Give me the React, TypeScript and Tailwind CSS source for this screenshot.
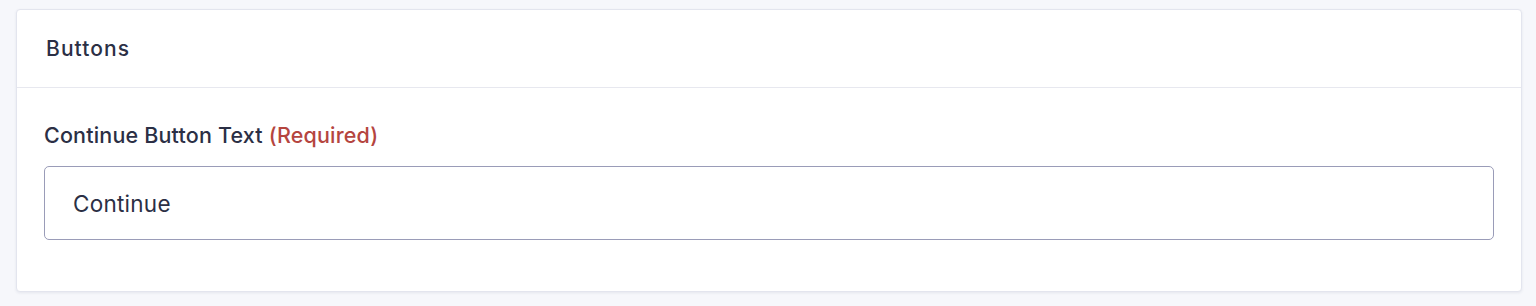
export default function App() {
  return (
    <div className="h-[306px] w-full bg-[#f6f7fb] pt-[9px] pl-4 pr-[14px] font-['Inter',sans-serif]">
      <div className="rounded-[4px] border border-[#e3e5ee] bg-white shadow-[0_1px_3px_rgba(30,35,80,0.08)]">
        <div className="flex h-[78px] items-center border-b border-[#e7e8ef] px-[29px]">
          <h2 className="text-[21px] leading-none font-medium tracking-[1.1px] text-[#2b2f45]">Buttons</h2>
        </div>
        <div className="px-[27px] pt-[34px] pb-[51px]">
          <label className="block text-[21.5px] leading-[26px] font-medium tracking-[0.17px] text-[#2b2f45]">
            Continue Button Text <span className="text-[#b5453f]">(Required)</span>
          </label>
          <input
            readOnly
            value="Continue"
            className="mt-[18px] block h-[74px] w-full rounded-[5px] border-[1.5px] border-[#9a9cb8] px-[28px] text-[22.5px] tracking-[0.25px] text-[#2b2f45] outline-none"
          />
        </div>
      </div>
    </div>
  );
}
